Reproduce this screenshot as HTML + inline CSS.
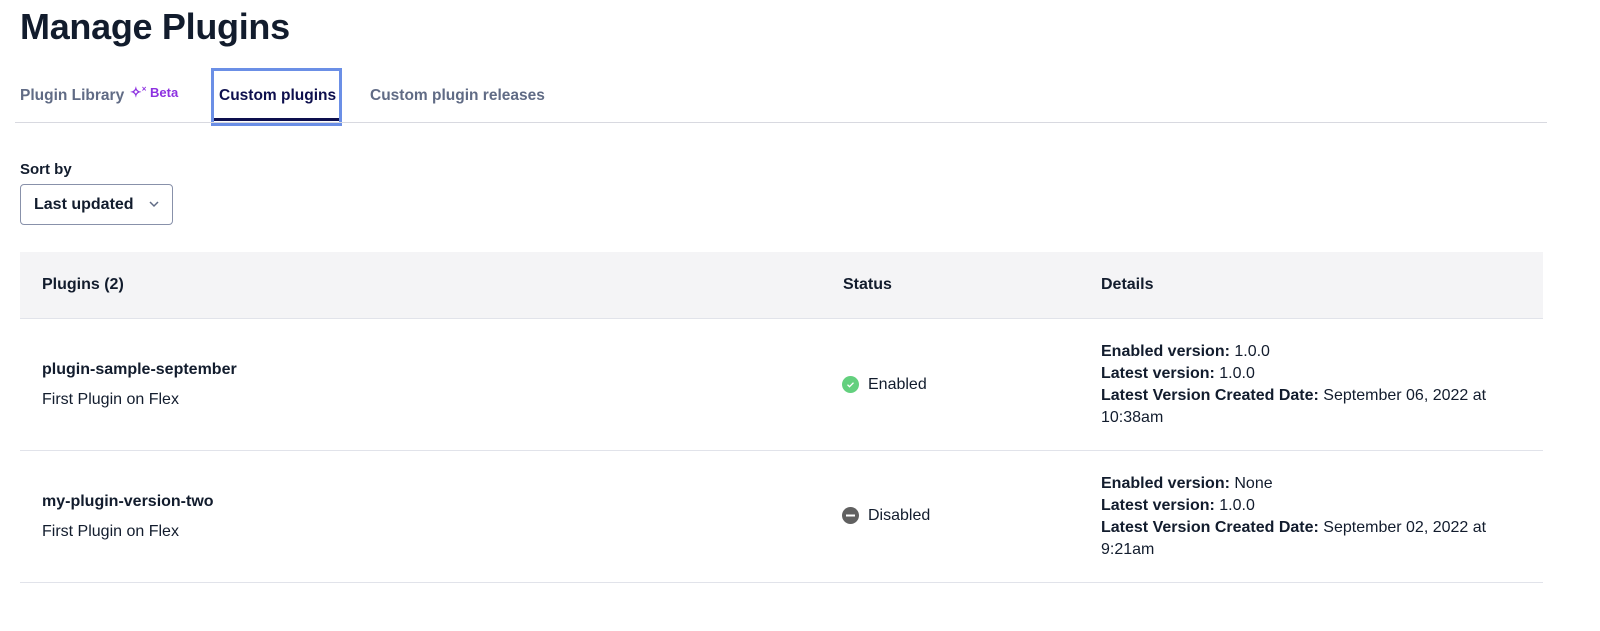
<!DOCTYPE html>
<html><head><style>
body{margin:0;width:1600px;height:631px;background:#fff;font-family:"Liberation Sans",sans-serif;color:#121c2d;position:relative;overflow:hidden}
.a{position:absolute;white-space:nowrap}
h1{position:absolute;left:20px;top:6px;margin:0;font-size:36px;font-weight:bold;letter-spacing:-0.3px}
.tab{font-size:15.5px;font-weight:bold;color:#606b85;top:87px}
.b{font-weight:bold}
.t{font-size:16px}
.d{font-size:16px;line-height:22px}
</style></head><body>
<h1>Manage Plugins</h1>
<div class="a tab" style="left:20px">Plugin Library</div>
<div class="a" style="left:130px;top:84px;color:#8d31e0;font-size:13px;font-weight:bold"><span style="font-size:14px">✧</span><sup style="font-size:8px">×</sup> Beta</div>
<div class="a" style="left:211px;top:68px;width:125px;height:52px;border:3px solid #6b8fe6"></div>
<div class="a" style="left:214px;top:118px;width:125px;height:3px;background:#0d0f4d"></div>
<div class="a tab" style="left:219px;color:#0d0f4d">Custom plugins</div>
<div class="a tab" style="left:370px">Custom plugin releases</div>
<div class="a" style="left:15px;top:122px;width:1532px;height:1px;background:#d8d9e0"></div>
<div class="a b" style="left:20px;top:161px;font-size:15px">Sort by</div>
<div class="a" style="left:20px;top:184px;width:151px;height:39px;border:1px solid #8891aa;border-radius:4px"></div>
<div class="a t b" style="left:34px;top:196px">Last updated</div>
<svg class="a" style="left:148px;top:199px" width="12" height="10"><path d="M2 3l4 4 4-4" fill="none" stroke="#606b85" stroke-width="1.5"/></svg>
<div class="a" style="left:20px;top:252px;width:1523px;height:66px;background:#f4f4f6;border-bottom:1px solid #e1e3ea"></div>
<div class="a t b" style="left:42px;top:276px">Plugins (2)</div>
<div class="a t b" style="left:843px;top:276px">Status</div>
<div class="a t b" style="left:1101px;top:276px">Details</div>
<div class="a t b" style="left:42px;top:361px">plugin-sample-september</div>
<div class="a t" style="left:42px;top:391px">First Plugin on Flex</div>
<svg class="a" style="left:842px;top:376px" width="17" height="17"><circle cx="8.5" cy="8.5" r="8.5" fill="#63d07e"/><path d="M5.5 8.7l2 2 4-4" fill="none" stroke="#fff" stroke-width="1.3"/></svg>
<div class="a t" style="left:868px;top:376px">Enabled</div>
<div class="a d" style="left:1101px;top:341px"><b>Enabled version:</b> 1.0.0<br><b>Latest version:</b> 1.0.0<br><b>Latest Version Created Date:</b> September 06, 2022 at<br>10:38am</div>
<div class="a" style="left:20px;top:450px;width:1523px;height:1px;background:#e1e3ea"></div>
<div class="a t b" style="left:42px;top:493px">my-plugin-version-two</div>
<div class="a t" style="left:42px;top:523px">First Plugin on Flex</div>
<svg class="a" style="left:842px;top:507px" width="17" height="17"><circle cx="8.5" cy="8.5" r="8.5" fill="#606060"/><rect x="4" y="7.5" width="9" height="2" fill="#fff"/></svg>
<div class="a t" style="left:868px;top:507px">Disabled</div>
<div class="a d" style="left:1101px;top:473px"><b>Enabled version:</b> None<br><b>Latest version:</b> 1.0.0<br><b>Latest Version Created Date:</b> September 02, 2022 at<br>9:21am</div>
<div class="a" style="left:20px;top:582px;width:1523px;height:1px;background:#e1e3ea"></div>
</body></html>
